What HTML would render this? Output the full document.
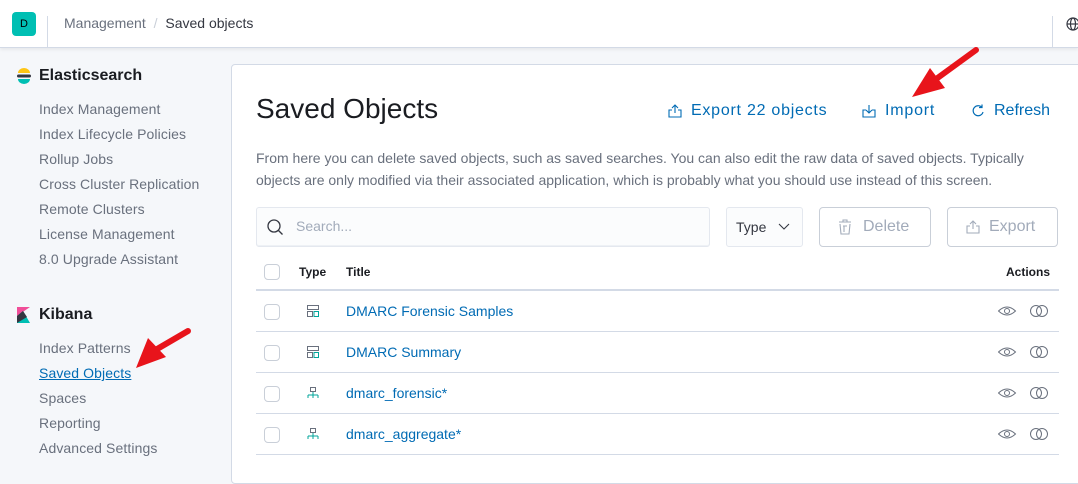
<!DOCTYPE html>
<html><head><meta charset="utf-8"><style>
*{margin:0;padding:0;box-sizing:border-box}
body{width:1078px;height:467px;overflow:hidden;background:#f5f7fa;font-family:"Liberation Sans",sans-serif;color:#343741;position:relative}
.a{position:absolute;white-space:nowrap}
.hdr{left:0;top:0;width:1078px;height:48px;background:#fff;border-bottom:1px solid #d3dae6;box-shadow:0 2px 3px rgba(0,0,0,.06)}
.side{font-size:14px;color:#69707d;letter-spacing:.1px}
.lnk{color:#006bb4}
.row{left:256px;width:803px;height:41px;border-bottom:1px solid #d3dae6}
.cb{position:absolute;left:8px;top:13px;width:16px;height:16px;border:1px solid #c9cfd8;border-radius:4px;background:#fff}
.btn{border:1px solid #c9cfd8;border-radius:4px;height:40px;top:207px;color:#a2abba;font-size:16px;line-height:38px}
</style></head><body>
<div class="a hdr"></div>
<div class="a" style="left:12px;top:12px;width:24px;height:24px;background:#00bfb3;border-radius:4px;font-size:11px;text-align:center;line-height:24px;color:#000">D</div>
<div class="a" style="left:47px;top:16px;width:1px;height:32px;background:#d3dae6"></div>
<div class="a" style="left:64px;top:15px;font-size:14px;color:#69707d">Management <span style="color:#c9cfd8;margin:0 4px">/</span> <span style="color:#343741">Saved objects</span></div>
<div class="a" style="left:1052px;top:16px;width:1px;height:32px;background:#d3dae6"></div>
<svg class="a" style="left:1066px;top:17px" width="14" height="14" viewBox="0 0 14 14" fill="none" stroke="#343741" stroke-width="1.2"><circle cx="7" cy="7" r="6"/><ellipse cx="7" cy="7" rx="2.5" ry="6"/><path d="M1 7h12"/></svg>

<svg class="a" style="left:16px;top:68px" width="16" height="16" viewBox="0 0 16 16"><path d="M2 5a6 5 0 0 1 12 0z" fill="#fec514"/><rect x="1" y="6.5" width="14" height="3" rx="1.5" fill="#343741"/><path d="M2 11h12a6 5 0 0 1-12 0z" fill="#00bfb3"/></svg>
<div class="a" style="left:39px;top:67px;font-size:16px;font-weight:bold;color:#1a1c21">Elasticsearch</div>
<div class="a side" style="left:39px;top:101px">Index Management</div>
<div class="a side" style="left:39px;top:126px">Index Lifecycle Policies</div>
<div class="a side" style="left:39px;top:151px">Rollup Jobs</div>
<div class="a side" style="left:39px;top:176px">Cross Cluster Replication</div>
<div class="a side" style="left:39px;top:201px">Remote Clusters</div>
<div class="a side" style="left:39px;top:226px">License Management</div>
<div class="a side" style="left:39px;top:251px">8.0 Upgrade Assistant</div>
<svg class="a" style="left:17px;top:307px" width="13" height="16" viewBox="0 0 13 16"><path d="M0 0h13L0 9z" fill="#f04e98"/><path d="M0 9L6 4l7 12H0z" fill="#00bfb3"/><path d="M0 9L6 4 10 10 0 16z" fill="#343741"/></svg>
<div class="a" style="left:39px;top:306px;font-size:16px;font-weight:bold;color:#1a1c21">Kibana</div>
<div class="a side" style="left:39px;top:340px">Index Patterns</div>
<div class="a side lnk" style="left:39px;top:365px;text-decoration:underline">Saved Objects</div>
<div class="a side" style="left:39px;top:390px">Spaces</div>
<div class="a side" style="left:39px;top:415px">Reporting</div>
<div class="a side" style="left:39px;top:440px">Advanced Settings</div>

<div class="a" style="left:231px;top:64px;width:860px;height:420px;background:#fff;border:1px solid #d3dae6;border-radius:4px"></div>
<div class="a" style="left:256px;top:93px;font-size:28px;color:#1a1c21">Saved Objects</div>
<svg class="a" style="left:667px;top:103px" width="16" height="16" viewBox="0 0 16 16" fill="none" stroke="#006bb4" stroke-width="1.1"><path d="M5 7H2v7h12V7h-3M8 10V2M5 5l3-3 3 3"/></svg>
<div class="a lnk" style="left:691px;top:102px;font-size:16px;letter-spacing:.75px">Export 22 objects</div>
<svg class="a" style="left:861px;top:103px" width="16" height="16" viewBox="0 0 16 16" fill="none" stroke="#006bb4" stroke-width="1.1"><path d="M5 7H2v7h12V7h-3M8 2v8M5 7l3 3 3-3"/></svg>
<div class="a lnk" style="left:885px;top:102px;font-size:16px;letter-spacing:.8px">Import</div>
<svg class="a" style="left:970px;top:103px" width="16" height="16" viewBox="0 0 16 16" fill="none" stroke="#006bb4" stroke-width="1.2"><path d="M12 4.5A5 5 0 1 0 13 9M12 1.5v3H9"/></svg>
<div class="a lnk" style="left:994px;top:102px;font-size:16px">Refresh</div>
<div class="a" style="left:256px;top:147px;font-size:14px;line-height:22px;color:#69707d;white-space:normal;width:810px">From here you can delete saved objects, such as saved searches. You can also edit the raw data of saved objects. Typically objects are only modified via their associated application, which is probably what you should use instead of this screen.</div>

<div class="a" style="left:256px;top:207px;width:454px;height:40px;background:#fbfcfd;border:1px solid #e4e8ef;border-radius:3px;box-shadow:inset 0 -1px 0 #eef1f5"></div>
<svg class="a" style="left:266px;top:218px" width="18" height="18" viewBox="0 0 18 18" fill="none" stroke="#343741" stroke-width="1.3"><circle cx="8" cy="8" r="6"/><path d="M12.5 12.5l4 4"/></svg>
<div class="a" style="left:296px;top:218px;font-size:14px;color:#a2abba">Search...</div>
<div class="a" style="left:726px;top:207px;width:77px;height:40px;background:#fbfcfd;border:1px solid #e4e8ef;border-radius:3px"></div>
<div class="a" style="left:736px;top:219px;font-size:14px;color:#343741">Type</div>
<svg class="a" style="left:778px;top:221px" width="12" height="10" viewBox="0 0 12 10" fill="none" stroke="#343741" stroke-width="1.1"><path d="M1 3l5 5 5-5"/></svg>
<div class="a btn" style="left:819px;width:112px;padding-left:43px">Delete</div>
<svg class="a" style="left:838px;top:219px" width="14" height="16" viewBox="0 0 14 16" fill="none" stroke="#a2abba" stroke-width="1.1"><path d="M1 3h12M5 3V1h4v2M2 5l1 10h8l1-10M6 7v6M5 7h4"/></svg>
<div class="a btn" style="left:947px;width:111px;padding-left:41px">Export</div>
<svg class="a" style="left:965px;top:219px" width="16" height="16" viewBox="0 0 16 16" fill="none" stroke="#a2abba" stroke-width="1.1"><path d="M5 7H2v7h12V7h-3M8 10V2M5 5l3-3 3 3"/></svg>

<div class="a row" style="top:254px;border-bottom:2px solid #d3dae6;height:37px"><div class="cb" style="top:10px"></div></div>
<div class="a" style="left:299px;top:265px;font-size:12px;font-weight:bold;color:#1a1c21">Type</div>
<div class="a" style="left:346px;top:265px;font-size:12px;font-weight:bold;color:#1a1c21">Title</div>
<div class="a" style="left:1006px;top:265px;font-size:12px;font-weight:bold;color:#1a1c21">Actions</div>

<div class="a row" style="top:291px"><div class="cb"></div></div>
<div class="a row" style="top:332px"><div class="cb"></div></div>
<div class="a row" style="top:373px"><div class="cb"></div></div>
<div class="a row" style="top:414px"><div class="cb"></div></div>

<svg class="a" style="left:306px;top:304px" width="14" height="14" viewBox="0 0 14 14" fill="none" stroke-width="1"><rect x="1.5" y="1.5" width="11" height="4" stroke="#69707d"/><rect x="1.5" y="7.5" width="5" height="5" stroke="#69707d"/><rect x="8" y="7.5" width="4.5" height="5" stroke="#00a69b"/></svg>
<svg class="a" style="left:306px;top:345px" width="14" height="14" viewBox="0 0 14 14" fill="none" stroke-width="1"><rect x="1.5" y="1.5" width="11" height="4" stroke="#69707d"/><rect x="1.5" y="7.5" width="5" height="5" stroke="#69707d"/><rect x="8" y="7.5" width="4.5" height="5" stroke="#00a69b"/></svg>
<svg class="a" style="left:306px;top:386px" width="14" height="14" viewBox="0 0 14 14" fill="none" stroke-width="1"><rect x="4.5" y="1.5" width="5" height="4" stroke="#69707d"/><path d="M7 6v3M2 9h10M2 9v3M7 9v3M12 9v3" stroke="#00a69b"/></svg>
<svg class="a" style="left:306px;top:427px" width="14" height="14" viewBox="0 0 14 14" fill="none" stroke-width="1"><rect x="4.5" y="1.5" width="5" height="4" stroke="#69707d"/><path d="M7 6v3M2 9h10M2 9v3M7 9v3M12 9v3" stroke="#00a69b"/></svg>

<div class="a lnk" style="left:346px;top:303px;font-size:14px">DMARC Forensic Samples</div>
<div class="a lnk" style="left:346px;top:344px;font-size:14px">DMARC Summary</div>
<div class="a lnk" style="left:346px;top:385px;font-size:14px">dmarc_forensic*</div>
<div class="a lnk" style="left:346px;top:426px;font-size:14px">dmarc_aggregate*</div>

<svg class="a" style="left:998px;top:303px" width="50" height="16" viewBox="0 0 50 16" fill="none" stroke="#69707d" stroke-width="1"><path d="M0.5 8q8.5-8 17 0q-8.5 8-17 0z"/><circle cx="9" cy="8" r="2.5"/><circle cx="38" cy="8" r="5.5"/><circle cx="44" cy="8" r="5.5"/></svg>
<svg class="a" style="left:998px;top:344px" width="50" height="16" viewBox="0 0 50 16" fill="none" stroke="#69707d" stroke-width="1"><path d="M0.5 8q8.5-8 17 0q-8.5 8-17 0z"/><circle cx="9" cy="8" r="2.5"/><circle cx="38" cy="8" r="5.5"/><circle cx="44" cy="8" r="5.5"/></svg>
<svg class="a" style="left:998px;top:385px" width="50" height="16" viewBox="0 0 50 16" fill="none" stroke="#69707d" stroke-width="1"><path d="M0.5 8q8.5-8 17 0q-8.5 8-17 0z"/><circle cx="9" cy="8" r="2.5"/><circle cx="38" cy="8" r="5.5"/><circle cx="44" cy="8" r="5.5"/></svg>
<svg class="a" style="left:998px;top:426px" width="50" height="16" viewBox="0 0 50 16" fill="none" stroke="#69707d" stroke-width="1"><path d="M0.5 8q8.5-8 17 0q-8.5 8-17 0z"/><circle cx="9" cy="8" r="2.5"/><circle cx="38" cy="8" r="5.5"/><circle cx="44" cy="8" r="5.5"/></svg>

<svg class="a" style="left:0;top:0" width="1078" height="467" viewBox="0 0 1078 467">
<path d="M976 50L932 82" stroke="#e8141b" stroke-width="6" stroke-linecap="round"/>
<path d="M912 97L930 68L945 88z" fill="#e8141b"/>
<path d="M188 331L152 352" stroke="#e8141b" stroke-width="6" stroke-linecap="round"/>
<path d="M136 368L148 338L166 357z" fill="#e8141b"/>
</svg>
</body></html>
